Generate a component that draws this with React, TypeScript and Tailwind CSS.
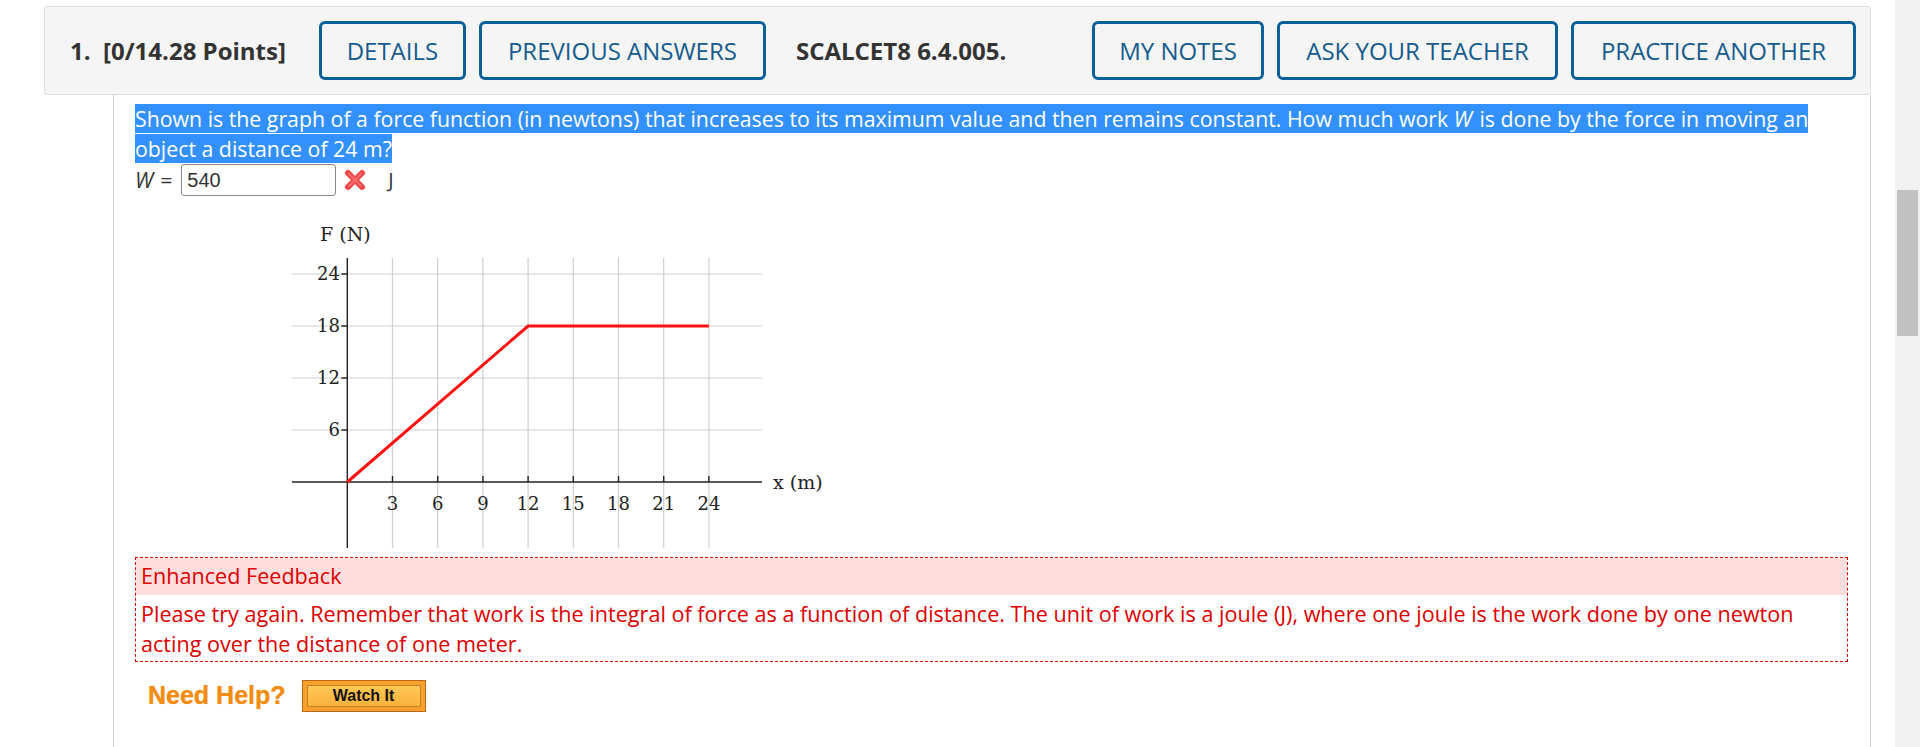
import React from "react";

const openSans = { fontFamily: '"Open Sans", "Noto Sans", sans-serif' };
const qFont = { fontFamily: '"Open Sans", "Noto Sans", sans-serif' };

function HeaderButton({ label, w }: { label: string; w: string }) {
  return (
    <div
      className={`${w} h-[59px] shrink-0 flex items-center justify-center rounded-[6px] border-[3px] border-[#0b6099] text-[24px] text-[#165b8d]`}
    >
      {label}
    </div>
  );
}

function RedX() {
  return (
    <svg width="24" height="24" viewBox="0 0 24 24" className="shrink-0">
      <path d="M5 5 L19 19 M19 5 L5 19" stroke="#ee4a4a" strokeWidth="6" strokeLinecap="round" />
      <path d="M6 6 L18 18 M18 6 L6 18" stroke="#f46a6a" strokeWidth="2" strokeLinecap="round" />
    </svg>
  );
}

function Chart() {
  const ox = 77.3;
  const oy = 282;
  const dx = 45.2;
  const dy = 52;
  const xs = [1, 2, 3, 4, 5, 6, 7, 8];
  const ys = [1, 2, 3, 4];
  const serif = '"DejaVu Serif", "Liberation Serif", serif';
  return (
    <svg width="600" height="357" viewBox="0 0 600 357" className="block ml-[135px]">
      {xs.map((k) => (
        <line key={"v" + k} x1={ox + k * dx} y1={58} x2={ox + k * dx} y2={348} stroke="#cfcfcf" strokeWidth="1.2" />
      ))}
      {ys.map((k) => (
        <line key={"h" + k} x1={22} y1={oy - k * dy} x2={492} y2={oy - k * dy} stroke="#cfcfcf" strokeWidth="1.2" />
      ))}
      <line x1={ox} y1={58} x2={ox} y2={348} stroke="#222" strokeWidth="1.4" />
      <line x1={22} y1={oy} x2={492} y2={oy} stroke="#222" strokeWidth="1.4" />
      {xs.map((k) => (
        <line key={"tx" + k} x1={ox + k * dx} y1={oy - 6} x2={ox + k * dx} y2={oy} stroke="#222" strokeWidth="1.4" />
      ))}
      {ys.map((k) => (
        <line key={"ty" + k} x1={ox - 6} y1={oy - k * dy} x2={ox} y2={oy - k * dy} stroke="#222" strokeWidth="1.4" />
      ))}
      <polyline
        points={`${ox},${oy} ${ox + 4 * dx},${oy - 3 * dy} ${ox + 8 * dx},${oy - 3 * dy}`}
        fill="none"
        stroke="#ff1010"
        strokeWidth="3"
      />
      <text x={50} y={41} fontFamily={serif} fontSize="19" fill="#222">F (N)</text>
      {ys.map((k) => (
        <text key={"ly" + k} x={70} y={oy - k * dy + 6} textAnchor="end" fontFamily={serif} fontSize="18" fill="#222">
          {k * 6}
        </text>
      ))}
      {xs.map((k) => (
        <text key={"lx" + k} x={ox + k * dx} y={310} textAnchor="middle" fontFamily={serif} fontSize="18" fill="#222">
          {k * 3}
        </text>
      ))}
      <text x={503} y={289} fontFamily={serif} fontSize="19" fill="#222">x (m)</text>
    </svg>
  );
}

export default function App() {
  return (
    <div className="flex h-[747px] w-[1920px] overflow-hidden bg-white">
      <div className="flex-1 min-w-0 flex flex-col pl-[44px] pr-[24px] pt-[6px]">
        <div
          className="h-[89px] shrink-0 flex items-center rounded-[3px] border border-[#dddddd] bg-[#f5f5f5] pl-[25px] pr-[14px]"
          style={openSans}
        >
          <div className="text-[24px] font-bold text-[#333333] whitespace-nowrap">1.&nbsp; [0/14.28 Points]</div>
          <div className="ml-[33px] flex gap-[13px]">
            <HeaderButton label="DETAILS" w="w-[147px]" />
            <HeaderButton label="PREVIOUS ANSWERS" w="w-[287px]" />
          </div>
          <div className="ml-[30px] text-[24px] font-bold text-[#333333] whitespace-nowrap">SCALCET8 6.4.005.</div>
          <div className="ml-auto flex gap-[13px]">
            <HeaderButton label="MY NOTES" w="w-[172px]" />
            <HeaderButton label="ASK YOUR TEACHER" w="w-[281px]" />
            <HeaderButton label="PRACTICE ANOTHER" w="w-[285px]" />
          </div>
        </div>

        <div className="ml-[69px] flex-1 border-x border-[#cccccc] pl-[21px] pr-[22px] pt-[9px]">
          <p className="text-[21.3px] leading-[29.5px] text-[#333333]" style={qFont}>
            <span className="bg-[#3390ff] text-white box-decoration-clone">
              Shown is the graph of a force function (in newtons) that increases to its maximum value and then remains
              constant. How much work <i className="pr-[2px]">W</i> is done by the force in moving an object a distance of 24 m?
            </span>
          </p>
          <div className="mt-[1px] h-[32px] flex items-center text-[21.3px] text-[#333333]" style={qFont}>
            <span className="italic pr-[1px]">W</span>
            <span className="ml-[6px]">=</span>
            <div className="ml-[9px] w-[155px] h-[32px] rounded-[3px] border border-[#8a8a8a] flex items-center pl-[5px] text-[20px] text-[#333333] font-['Liberation_Sans',Arial,sans-serif]">
              540
            </div>
            <div className="ml-[7px]">
              <RedX />
            </div>
            <span className="ml-[21px] text-[20px]">J</span>
          </div>

          <div className="mt-[4px]">
            <Chart />
          </div>

          <div className="border border-dashed border-[#dd0000] text-[21.6px] text-[#dd0000]" style={qFont}>
            <div className="h-[37px] bg-[#ffdddd] flex items-center pl-[5px]">Enhanced Feedback</div>
            <div className="pl-[5px] pr-[30px] pt-[4px] pb-[2px] leading-[30px]">
              Please try again. Remember that work is the integral of force as a function of distance. The unit of work is a
              joule (J), where one joule is the work done by one newton acting over the distance of one meter.
            </div>
          </div>

          <div className="mt-[18px] flex items-center h-[32px]">
            <span className="ml-[13px] text-[25px] font-bold text-[#f28c12] font-['Liberation_Sans',Arial,sans-serif] [text-shadow:0_0_1px_#f7b060]">
              Need Help?
            </span>
            <div className="ml-[16px] w-[124px] h-[32px] border border-[#b8661c] bg-[#f7a12b] p-[4px]">
              <div className="h-full w-full border border-[#c0832c] bg-gradient-to-b from-[#ffc855] to-[#fbb23a] flex items-center justify-center text-[16px] font-bold text-[#111] font-['Liberation_Sans',Arial,sans-serif]">
                Watch It
              </div>
            </div>
          </div>
        </div>
      </div>
      <div className="w-[25px] shrink-0 bg-[#f1f1f1] pt-[190px] px-[2px]">
        <div className="h-[146px] bg-[#c1c1c1]" />
      </div>
    </div>
  );
}
